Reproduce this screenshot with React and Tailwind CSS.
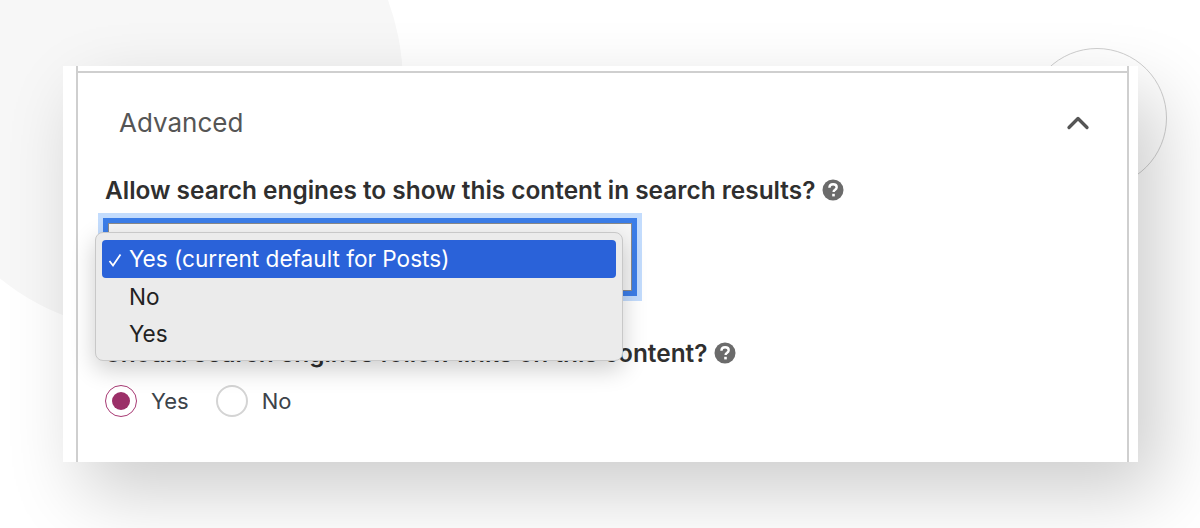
import React from 'react';
import { ChevronUp } from 'lucide-react';

const HelpIcon = () => (
  <svg viewBox="0 0 22 22" className="h-[22px] w-[22px] shrink-0">
    <circle cx="11" cy="11" r="10.5" fill="#6b6b6b" />
    <path d="M7.4 8.8c0-2.2 1.6-3.5 3.7-3.5s3.6 1.2 3.6 3c0 1.5-.9 2.1-1.9 2.8-.8.5-1.2 1-1.2 1.9" fill="none" stroke="#fff" strokeWidth="2.4" />
    <rect x="10.2" y="14.8" width="2.6" height="2.6" fill="#fff" />
  </svg>
);

const Radio = ({ label, checked }) => (
  <label className="flex items-center gap-[14px]">
    {checked ? (
      <span className="flex h-8 w-8 items-center justify-center rounded-full border-[1.5px] border-[#a83a74] bg-white">
        <span className="h-[18px] w-[18px] rounded-full bg-[#9b2f68]" />
      </span>
    ) : (
      <span className="h-8 w-8 rounded-full border-2 border-[#d4d4d4] bg-white" />
    )}
    <span className="text-[22px] leading-none text-[#3c434a]">{label}</span>
  </label>
);

const Option = ({ label, selected }) => (
  <div className={`relative flex h-[38px] items-center rounded-[4px] pl-[27px] ${selected ? 'bg-[#2a62d9] text-white' : 'text-[#222222]'}`}>
    {selected && (
      <svg viewBox="0 0 14 14" className="absolute left-[6px] top-[13px] h-[14px] w-[14px]">
        <path d="M1.5 8l3.5 4.5L12.5 1.5" fill="none" stroke="#fff" strokeWidth="1.8" />
      </svg>
    )}
    <span>{label}</span>
  </div>
);

export default function App() {
  return (
    <div className="relative h-[528px] w-[1200px] overflow-hidden bg-white font-['Inter',sans-serif]">
      {/* backdrop shapes */}
      <div className="absolute left-[-93px] top-[-163px] h-[496px] w-[496px] rounded-full bg-[#f7f7f7]" />
      <div className="absolute left-[1027px] top-[48px] h-[140px] w-[140px] rounded-full border border-[#cfcfcf]" />

      <div className="relative ml-[63px] mt-[66px] h-[396px] w-[1075px] bg-white pl-[13px] pr-[9px] shadow-[20px_30px_70px_rgba(0,0,0,0.2)]">
        <div className="h-full border-x-2 border-[#cfcfcf] pt-[5px]">
          <div className="h-full border-t-2 border-[#cfcfcf] pl-[27px] pr-[31px]">
            <div className="flex h-[99px] items-center justify-between pl-[14px]">
              <h2 className="text-[26px] font-normal leading-none text-[#555555]">Advanced</h2>
              <ChevronUp className="h-9 w-9 text-[#555555]" strokeWidth={2.2} />
            </div>

            <div className="flex h-[36px] items-center gap-[7px] text-[24.4px] font-semibold text-[#2f2f2f]">
              <span>Allow search engines to show this content in search results?</span>
              <HelpIcon />
            </div>

            <div className="relative -ml-[7px] mt-[5px] w-[544px]">
              <div className="h-[88px] bg-[#c3dcfd] p-[5px]">
                <div className="h-full border-[5px] border-[#3b7de8] bg-[#f6f6f6]">
                  <div className="h-full border border-[#8a8a8a]" />
                </div>
              </div>
              <div className="absolute left-[-3px] top-[19px] z-10 flex h-[129px] w-[528px] flex-col rounded-[8px] border border-[#c8c8c8] bg-[#ebebeb] px-[6px] py-[7px] text-[22.6px] shadow-[0_8px_24px_rgba(0,0,0,0.2)]">
                <Option label="Yes (current default for Posts)" selected />
                <Option label="No" />
                <Option label="Yes" />
              </div>
            </div>

            <div className="mt-[34px] flex h-[36px] items-center gap-[7px] text-[24.4px] font-semibold text-[#2f2f2f]">
              <span>Should search engines follow links on this content?</span>
              <HelpIcon />
            </div>

            <div className="mt-[14px] flex items-center gap-[27px]">
              <Radio label="Yes" checked />
              <Radio label="No" />
            </div>
          </div>
        </div>
      </div>
    </div>
  );
}
